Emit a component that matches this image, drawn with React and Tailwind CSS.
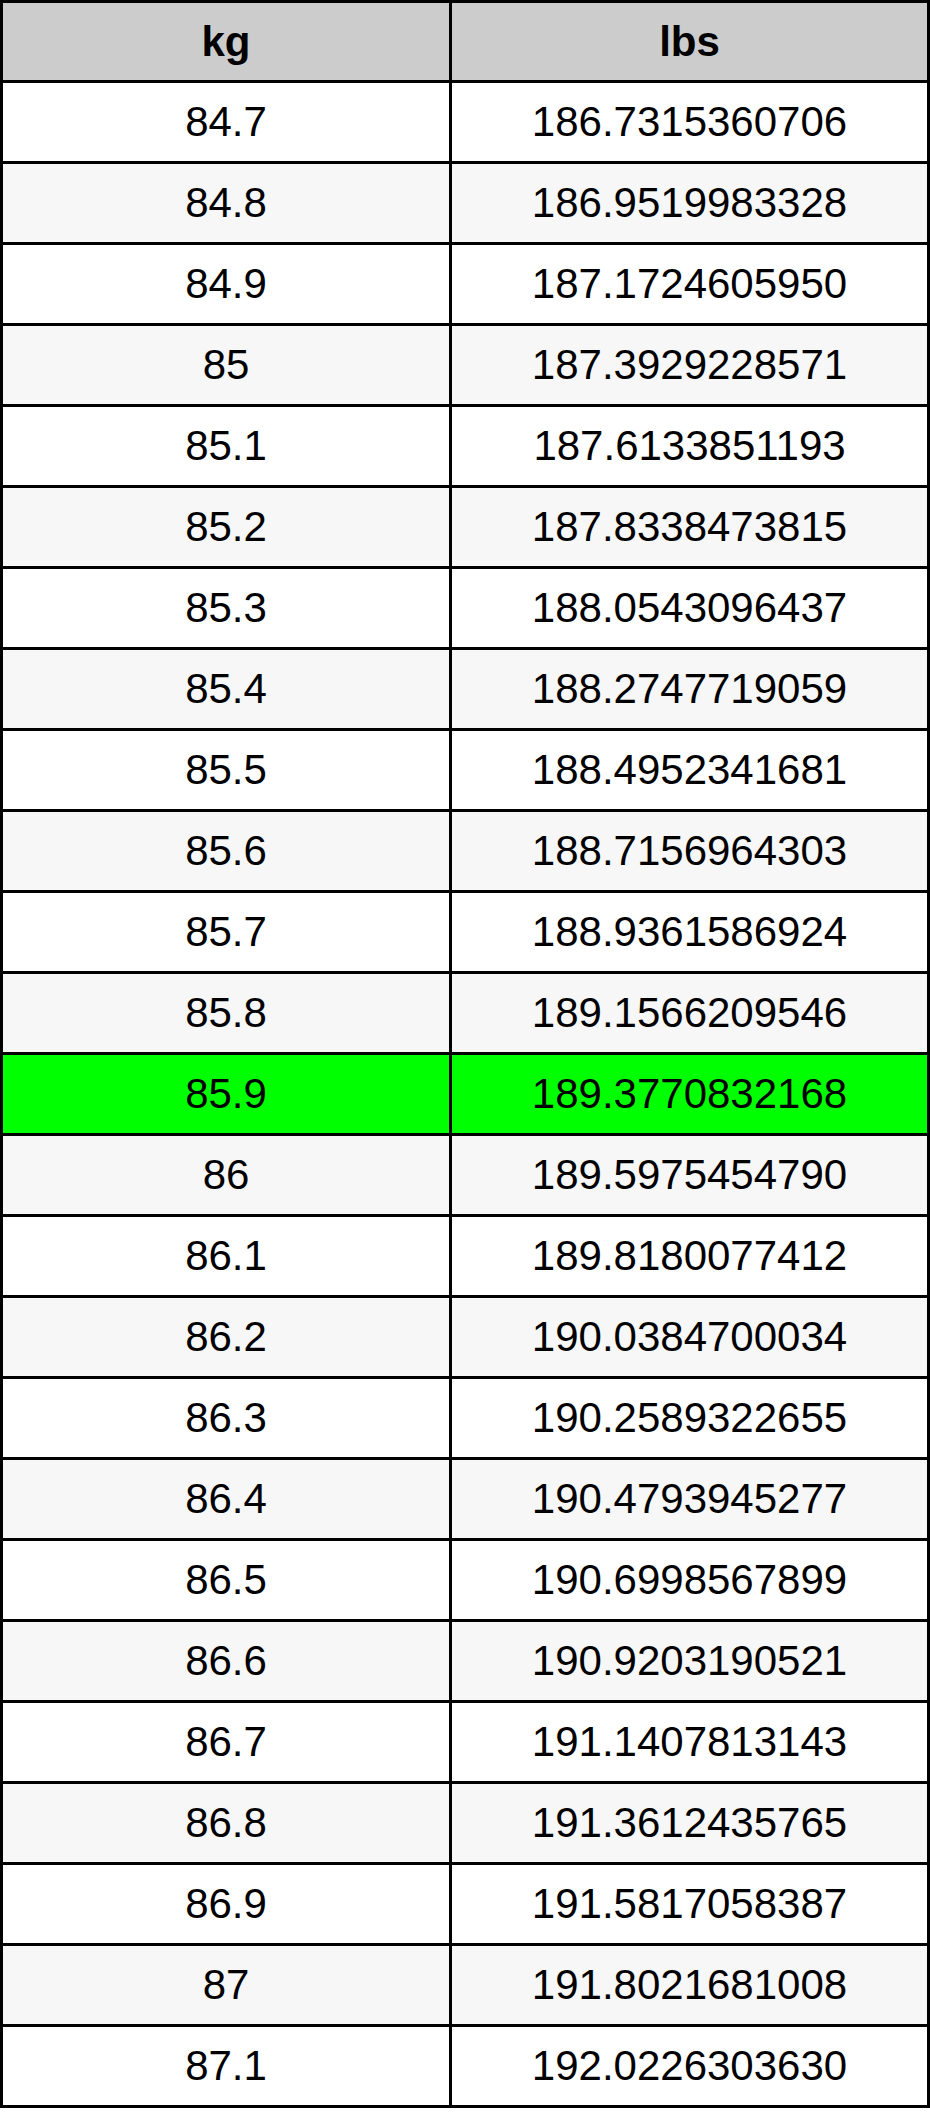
import React from 'react';

const rows = [
    ['84.7', '186.7315360706'],
    ['84.8', '186.9519983328'],
    ['84.9', '187.1724605950'],
    ['85', '187.3929228571'],
    ['85.1', '187.6133851193'],
    ['85.2', '187.8338473815'],
    ['85.3', '188.0543096437'],
    ['85.4', '188.2747719059'],
    ['85.5', '188.4952341681'],
    ['85.6', '188.7156964303'],
    ['85.7', '188.9361586924'],
    ['85.8', '189.1566209546'],
    ['85.9', '189.3770832168'],
    ['86', '189.5975454790'],
    ['86.1', '189.8180077412'],
    ['86.2', '190.0384700034'],
    ['86.3', '190.2589322655'],
    ['86.4', '190.4793945277'],
    ['86.5', '190.6998567899'],
    ['86.6', '190.9203190521'],
    ['86.7', '191.1407813143'],
    ['86.8', '191.3612435765'],
    ['86.9', '191.5817058387'],
    ['87', '191.8021681008'],
    ['87.1', '192.0226303630'],
];

const HIGHLIGHT = '85.9';

const App = () => {
    return (
        <div className="w-[930px] bg-white font-['Liberation_Sans',Arial,sans-serif] text-black">
            <div className="border-[3px] border-black">
                <div className="flex h-[77px] bg-[#cccccc] text-[42px] font-bold leading-none">
                    <div className="w-[446px] flex items-center justify-center">kg</div>
                    <div className="flex-1 flex items-center justify-center border-l-[3px] border-black">lbs</div>
                </div>
                {rows.map(([kg, lbs], i) => {
                    const bg = kg === HIGHLIGHT ? 'bg-[#00ff00]' : i % 2 === 1 ? 'bg-[#f7f7f7]' : 'bg-white';
                    return (
                        <div key={kg} className={`flex h-[81px] border-t-[3px] border-black text-[42px] leading-none ${bg}`}>
                            <div className="w-[446px] flex items-center justify-center">{kg}</div>
                            <div className="flex-1 flex items-center justify-center border-l-[3px] border-black">{lbs}</div>
                        </div>
                    );
                })}
            </div>
        </div>
    );
};

export default App;
